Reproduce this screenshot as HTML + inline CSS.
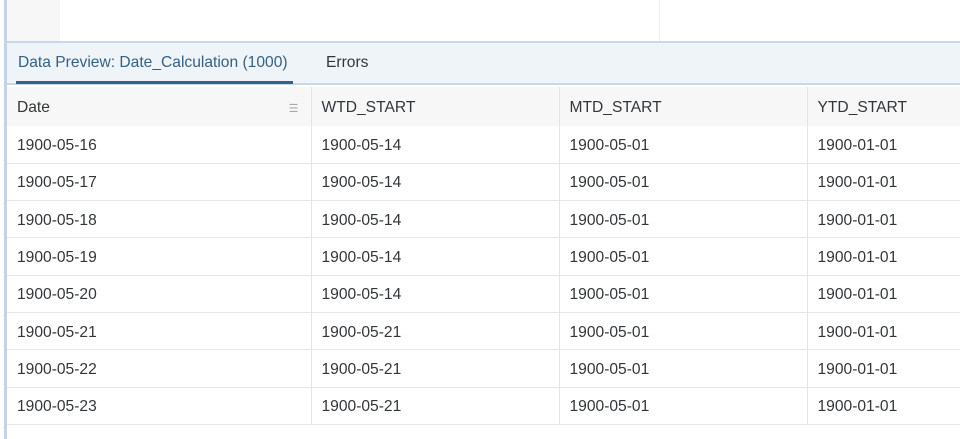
<!DOCTYPE html>
<html><head><style>
body{margin:0;width:960px;height:439px;overflow:hidden;background:#fff;font-family:"Liberation Sans",sans-serif;position:relative}
.lb{position:absolute;left:4px;top:0;width:3px;height:439px;background:#c3d4e6}
.gray{position:absolute;left:7px;top:0;width:53px;height:41px;background:#f7f7f7}
.vl{position:absolute;left:659px;top:0;width:1px;height:41px;background:#eee}
.tabs{position:absolute;left:7px;top:41px;width:953px;height:44px;background:#eff4f9;border-top:2px solid #c8d8e8;border-bottom:2px solid #c8d8e8;box-sizing:border-box}
.t{position:absolute;top:11px;font-size:15.6px}
.ul{position:absolute;left:9px;top:38px;width:277px;height:3px;background:#346187}
table{position:absolute;left:7px;top:87px;border-collapse:collapse;table-layout:fixed;width:1000px;font-size:15.6px;color:#32363a}
td{height:37.3px;padding:3px 0 0 10px;border-bottom:1px solid #e5e5e5;border-right:1px solid #e5e5e5;box-sizing:border-box;white-space:nowrap}
tr.h td{background:#f7f7f7;height:39px;border-bottom:none}
</style></head><body>
<div class="lb"></div><div class="gray"></div><div class="vl"></div>
<div class="tabs"><span class="t" style="left:11px;color:#346187">Data Preview: Date_Calculation (1000)</span><span class="t" style="left:319px;color:#32363a">Errors</span><div class="ul"></div></div>
<table>
<colgroup><col style="width:304px"><col style="width:248px"><col style="width:248px"><col style="width:200px"></colgroup>
<tr class="h"><td style="position:relative">Date<span style="position:absolute;right:12px;top:15px;color:#aaa;font-size:11px">&#9776;</span></td><td>WTD_START</td><td>MTD_START</td><td>YTD_START</td></tr>
<tr><td>1900-05-16</td><td>1900-05-14</td><td>1900-05-01</td><td>1900-01-01</td></tr>
<tr><td>1900-05-17</td><td>1900-05-14</td><td>1900-05-01</td><td>1900-01-01</td></tr>
<tr><td>1900-05-18</td><td>1900-05-14</td><td>1900-05-01</td><td>1900-01-01</td></tr>
<tr><td>1900-05-19</td><td>1900-05-14</td><td>1900-05-01</td><td>1900-01-01</td></tr>
<tr><td>1900-05-20</td><td>1900-05-14</td><td>1900-05-01</td><td>1900-01-01</td></tr>
<tr><td>1900-05-21</td><td>1900-05-21</td><td>1900-05-01</td><td>1900-01-01</td></tr>
<tr><td>1900-05-22</td><td>1900-05-21</td><td>1900-05-01</td><td>1900-01-01</td></tr>
<tr><td>1900-05-23</td><td>1900-05-21</td><td>1900-05-01</td><td>1900-01-01</td></tr>
</table>
</body></html>
